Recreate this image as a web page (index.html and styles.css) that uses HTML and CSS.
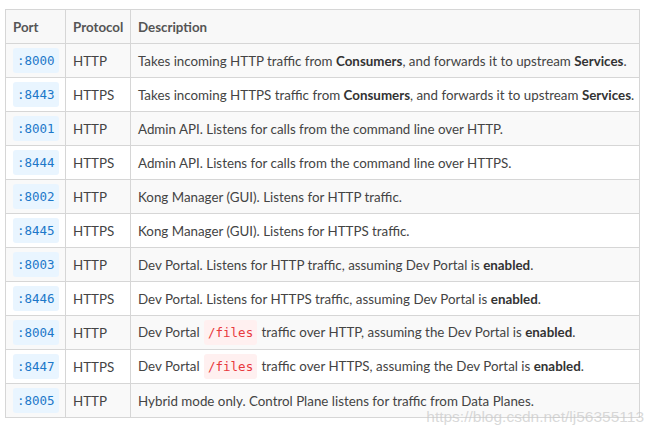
FILE: index.html
```html
<!DOCTYPE html>
<html>
<head>
<meta charset="utf-8">
<link rel="stylesheet" href="styles.css">
</head>
<body>
<div class="page">
<table class="ports">
<colgroup><col class="c-port"><col class="c-proto"><col class="c-desc"></colgroup>
<thead>
<tr><th>Port</th><th>Protocol</th><th>Description</th></tr>
</thead>
<tbody>
<tr><td><code class="port">:8000</code></td><td>HTTP</td><td>Takes incoming HTTP traffic from <strong>Consumers</strong>, and forwards it to upstream <strong>Services</strong>.</td></tr>
<tr><td><code class="port">:8443</code></td><td>HTTPS</td><td>Takes incoming HTTPS traffic from <strong>Consumers</strong>, and forwards it to upstream <strong>Services</strong>.</td></tr>
<tr><td><code class="port">:8001</code></td><td>HTTP</td><td>Admin API. Listens for calls from the command line over HTTP.</td></tr>
<tr><td><code class="port">:8444</code></td><td>HTTPS</td><td>Admin API. Listens for calls from the command line over HTTPS.</td></tr>
<tr><td><code class="port">:8002</code></td><td>HTTP</td><td>Kong Manager (GUI). Listens for HTTP traffic.</td></tr>
<tr><td><code class="port">:8445</code></td><td>HTTPS</td><td>Kong Manager (GUI). Listens for HTTPS traffic.</td></tr>
<tr><td><code class="port">:8003</code></td><td>HTTP</td><td>Dev Portal. Listens for HTTP traffic, assuming Dev Portal is <strong>enabled</strong>.</td></tr>
<tr><td><code class="port">:8446</code></td><td>HTTPS</td><td>Dev Portal. Listens for HTTPS traffic, assuming Dev Portal is <strong>enabled</strong>.</td></tr>
<tr><td><code class="port">:8004</code></td><td>HTTP</td><td>Dev Portal <code class="path">/files</code> traffic over HTTP, assuming the Dev Portal is <strong>enabled</strong>.</td></tr>
<tr><td><code class="port">:8447</code></td><td>HTTPS</td><td>Dev Portal <code class="path">/files</code> traffic over HTTPS, assuming the Dev Portal is <strong>enabled</strong>.</td></tr>
<tr><td><code class="port">:8005</code></td><td>HTTP</td><td>Hybrid mode only. Control Plane listens for traffic from Data Planes.</td></tr>
</tbody>
</table>
<div class="watermark">https://blog.csdn.net/lj56355113</div>
</div>
</body>
</html>
```
FILE: styles.css
```css
html, body {
  margin: 0;
  padding: 0;
  background: #fff;
}
.page {
  position: relative;
  padding: 9px 5px;
}
.ports {
  border-collapse: collapse;
  table-layout: fixed;
  width: 635px;
  font-family: Lato, "Liberation Sans", sans-serif;
  font-size: 13.35px;
  color: #444;
}
.c-port { width: 60px; }
.c-proto { width: 65px; }
.ports th, .ports td {
  border: 1px solid #d6d6d6;
  text-align: left;
  vertical-align: middle;
  white-space: nowrap;
  padding: 0 7px;
  height: 33px;
}
.ports th {
  font-weight: bold;
  color: #555;
  background: #f8f8f8;
}
.ports tbody tr:nth-child(odd) td {
  background: #f9f9f9;
}
.ports strong {
  font-weight: bold;
  color: #333;
}
.port {
  display: inline-block;
  font-family: "DejaVu Sans Mono", monospace;
  font-size: 12.5px;
  line-height: 25px;
  padding: 0 4px;
  border-radius: 3px;
  background: #e9f5ff;
  color: #1d78c9;
}
.path {
  display: inline-block;
  font-family: "DejaVu Sans Mono", monospace;
  font-size: 12.5px;
  line-height: 25px;
  padding: 0 4px;
  margin: 0 1px;
  border-radius: 3px;
  background: #fff0f0;
  color: #e8393d;
}
.watermark {
  position: absolute;
  right: 10px;
  bottom: 1px;
  font-family: "Liberation Sans", sans-serif;
  font-size: 15.5px;
  color: rgba(200, 200, 200, 0.7);
  pointer-events: none;
}
```
